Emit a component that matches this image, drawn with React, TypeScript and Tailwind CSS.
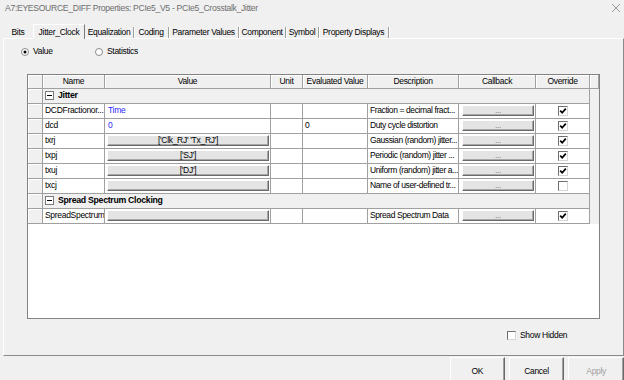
import React from "react";

type Row =
  | { kind: "group"; label: string }
  | {
      kind: "row";
      name: string;
      value?: string;
      button?: string;
      evalv?: string;
      desc: string;
      checked: boolean;
    };

const rows: Row[] = [
  { kind: "group", label: "Jitter" },
  { kind: "row", name: "DCDFractionor...", value: "Time", evalv: "", desc: "Fraction = decimal fract...", checked: true },
  { kind: "row", name: "dcd", value: "0", evalv: "0", desc: "Duty cycle distortion", checked: true },
  { kind: "row", name: "txrj", button: "['Clk_RJ' 'Tx_RJ']", desc: "Gaussian (random) jitter...", checked: true },
  { kind: "row", name: "txpj", button: "['SJ']", desc: "Periodic (random) jitter ...", checked: true },
  { kind: "row", name: "txuj", button: "['DJ']", desc: "Uniform (random) jitter a...", checked: true },
  { kind: "row", name: "txcj", button: "", desc: "Name of user-defined tr...", checked: false },
  { kind: "group", label: "Spread Spectrum Clocking" },
  { kind: "row", name: "SpreadSpectrum", button: "", desc: "Spread Spectrum Data", checked: true },
];

function Check() {
  return (
    <svg width="8" height="8" viewBox="0 0 8 8">
      <path d="M1.2 3.6 L3.2 5.8 L6.8 1.6" fill="none" stroke="#000" strokeWidth="1.7" />
    </svg>
  );
}

function CheckBox({ checked }: { checked: boolean }) {
  return (
    <div className="w-[10px] h-[10px] bg-white border border-t-[#6f6f6f] border-l-[#6f6f6f] border-r-[#d6d6d6] border-b-[#d6d6d6] flex items-center justify-center">
      {checked && <Check />}
    </div>
  );
}

function Radio({ on }: { on: boolean }) {
  return (
    <svg width="8" height="8" viewBox="0 0 8 8">
      <circle cx="4" cy="4" r="3.5" fill="#fff" stroke="#8a8a8a" strokeWidth="1" />
      {on && <circle cx="4" cy="4" r="1.5" fill="#000" />}
    </svg>
  );
}

function CellButton({ text, dots }: { text: string; dots?: boolean }) {
  return (
    <div
      className={
        "h-[11px] bg-[#e4e4e4] border border-t-white border-l-white border-r-[#6a6a6a] border-b-[#6a6a6a] shadow-[inset_-1px_-1px_0_#a8a8a8] flex items-center justify-center whitespace-nowrap leading-none " +
        (dots ? "text-[#9c7b7b]" : "text-black")
      }
    >
      {text}
    </div>
  );
}

function MinusBox() {
  return (
    <div className="w-[9px] h-[9px] bg-white border border-[#7a7a7a] flex items-center justify-center">
      <div className="w-[5px] h-px bg-black" />
    </div>
  );
}

const headers: { w: string; label: string }[] = [
  { w: "w-[15px]", label: "" },
  { w: "w-[62px]", label: "Name" },
  { w: "w-[166px]", label: "Value" },
  { w: "w-[32px]", label: "Unit" },
  { w: "w-[65px]", label: "Evaluated Value" },
  { w: "w-[91px]", label: "Description" },
  { w: "w-[77px]", label: "Callback" },
  { w: "w-[54px]", label: "Override" },
  { w: "w-[9px]", label: "" },
];

const tabs: { label: string; w: string; sel?: boolean; sep?: boolean }[] = [
  { label: "Bits", w: "w-[30px]" },
  { label: "Jitter_Clock", w: "w-[52px]", sel: true },
  { label: "Equalization", w: "w-[49px]", sep: true },
  { label: "Coding", w: "w-[35px]", sep: true },
  { label: "Parameter Values", w: "w-[70px]", sep: true },
  { label: "Component", w: "w-[47px]", sep: true },
  { label: "Symbol", w: "w-[33px]", sep: true },
  { label: "Property Displays", w: "w-[70px]", sep: true },
];

const cellBase = "h-[15px] border-r border-b border-[#a0a0a0] flex items-center whitespace-nowrap overflow-hidden";
const rowHead = "w-[15px] h-[15px] bg-[#f0f0f0] border-r border-b border-[#a0a0a0] shadow-[inset_1px_1px_0_#fff]";

export default function App() {
  return (
    <div className="w-[624px] h-[380px] bg-[#f0f0f0] overflow-hidden flex flex-col text-[8.5px] tracking-[-0.3px] leading-none text-black font-['Liberation_Sans',Arial,sans-serif]">
      {/* Title bar */}
      <div className="h-[17px] flex items-center justify-between pl-[5px] pr-[3px]">
        <span className="text-[#6e6e6e] text-[8.6px] whitespace-nowrap">A7:EYESOURCE_DIFF Properties: PCIe5_V5 - PCIe5_Crosstalk_Jitter</span>
        <svg width="10" height="10" viewBox="0 0 10 10">
          <path d="M1 1 L9 9 M9 1 L1 9" stroke="#9a9a9a" strokeWidth="1" />
        </svg>
      </div>

      {/* Tabs */}
      <div className="h-[21px] flex items-end pl-[3px]">
        {tabs.map((t) =>
          t.sel ? (
            <div
              key={t.label}
              className={
                t.w +
                " h-[15px] -mb-px relative z-10 bg-[#f0f0f0] border-t border-l border-r border-t-white border-l-white border-r-[#7a7a7a] flex items-start justify-center pt-[3px] whitespace-nowrap"
              }
            >
              {t.label}
            </div>
          ) : (
            <div
              key={t.label}
              className={
                t.w +
                " h-[11px] flex items-center justify-center whitespace-nowrap " +
                (t.sep ? "border-r border-r-[#a0a0a0] shadow-[1px_0_0_#fff]" : "")
              }
            >
              {t.label}
            </div>
          )
        )}
      </div>

      {/* Panel */}
      <div className="ml-[3px] w-[621px] h-[321px] border border-t-white border-l-white border-r-[#8a8a8a] border-b-[#8a8a8a] flex flex-col">
        {/* radios */}
        <div className="mt-[8px] h-[10px] flex items-center pl-[17px]">
          <Radio on />
          <span className="ml-[4px] w-[62px]">Value</span>
          <Radio on={false} />
          <span className="ml-[4px]">Statistics</span>
        </div>

        {/* grid */}
        <div className="mt-[17px] ml-[23px] w-[573px] h-[245px] bg-white border border-[#828282] flex flex-col">
          <div className="flex h-[14px]">
            {headers.map((h, i) => (
              <div
                key={i}
                className={
                  h.w +
                  " h-[14px] bg-[#f0f0f0] border-r border-b border-[#a0a0a0] shadow-[inset_1px_1px_0_#fff] flex items-center justify-center whitespace-nowrap overflow-hidden"
                }
              >
                {h.label}
              </div>
            ))}
          </div>
          {rows.map((r, i) =>
            r.kind === "group" ? (
              <div key={i} className="flex h-[15px]">
                <div className={rowHead} />
                <div className="w-[547px] h-[15px] bg-[#f0f0f0] border-r border-b border-[#a0a0a0] flex items-center pl-[2px] gap-[4px] font-bold text-[8.75px]">
                  <MinusBox />
                  <span>{r.label}</span>
                </div>
                <div className="w-[9px] h-[15px] bg-[#f0f0f0]" />
              </div>
            ) : (
              <div key={i} className="flex h-[15px]">
                <div className={rowHead} />
                <div className={cellBase + " w-[62px] bg-white pl-[2px]"}>{r.name}</div>
                <div className={cellBase + " w-[166px] bg-white"}>
                  {r.value !== undefined ? (
                    <span className="pl-[3px] text-[#2a2aff]">{r.value}</span>
                  ) : (
                    <div className="w-full pl-[2px] pr-px pb-px">
                      <CellButton text={r.button ?? ""} />
                    </div>
                  )}
                </div>
                <div className={cellBase + " w-[32px] bg-white"} />
                <div className={cellBase + " w-[65px] bg-white pl-[2px]"}>{r.evalv}</div>
                <div className={cellBase + " w-[91px] bg-white pl-[2px] tracking-[-0.4px]"}>{r.desc}</div>
                <div className={cellBase + " w-[77px] bg-white"}>
                  <div className="w-full pl-[3px] pr-px pb-px">
                    <CellButton text="..." dots />
                  </div>
                </div>
                <div className={cellBase + " w-[54px] bg-white justify-center"}>
                  <CheckBox checked={r.checked} />
                </div>
                <div className="w-[9px] h-[15px] bg-[#f0f0f0]" />
              </div>
            )
          )}
        </div>

        {/* show hidden */}
        <div className="mt-[12px] h-[10px] flex items-center pl-[503px]">
          <div className="w-[9px] h-[9px] bg-white border border-t-[#6f6f6f] border-l-[#6f6f6f] border-r-[#d6d6d6] border-b-[#d6d6d6]" />
          <span className="ml-[4px]">Show Hidden</span>
        </div>
      </div>

      {/* buttons */}
      <div className="mt-px flex pl-[450px] gap-[4px]">
        <div className="w-[55px] h-[23px] border-l border-t border-r border-l-white border-t-white border-r-[#6a6a6a] shadow-[inset_-1px_0_0_#a0a0a0] flex items-start justify-center pt-[9px]">OK</div>
        <div className="w-[56px] h-[23px] border-l border-t border-r border-l-white border-t-white border-r-[#6a6a6a] shadow-[inset_-1px_0_0_#a0a0a0] flex items-start justify-center pt-[9px]">Cancel</div>
        <div className="w-[56px] h-[23px] border-l border-t border-r border-l-white border-t-white border-r-[#6a6a6a] shadow-[inset_-1px_0_0_#a0a0a0] flex items-start justify-center pt-[9px] text-[#a0a0a0]">Apply</div>
      </div>
    </div>
  );
}
